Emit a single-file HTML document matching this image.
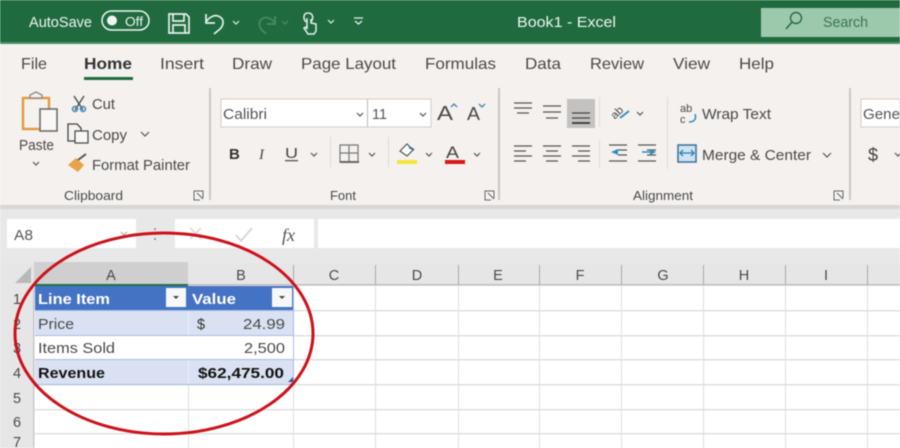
<!DOCTYPE html>
<html><head><meta charset="utf-8"><title>Book1 - Excel</title>
<style>
html,body{margin:0;padding:0;background:#fff;width:900px;height:448px;overflow:hidden}
svg{display:block;filter:blur(.4px)}
text{font-family:"Liberation Sans",sans-serif;fill:#4a4a4a}
</style></head><body>
<svg width="900" height="448" viewBox="0 0 900 448" xmlns="http://www.w3.org/2000/svg">
<rect width="900" height="448" fill="#fff"/>
<!-- title bar -->
<rect width="900" height="44" fill="#1f6b3f"/>
<rect y="42" width="900" height="2" fill="#4f8f68"/>
<text x="29" y="27" font-size="14.5" style="fill:#eef5f0" textLength="63" lengthAdjust="spacingAndGlyphs">AutoSave</text>
<rect x="102" y="11" width="47" height="19" rx="9.5" fill="none" stroke="#eef5f0" stroke-width="1.5"/>
<circle cx="112" cy="20.5" r="5" fill="#eef5f0"/>
<text x="125" y="26" font-size="12.5" style="fill:#eef5f0" textLength="18" lengthAdjust="spacingAndGlyphs">Off</text>
<g fill="none" stroke="#e6efe9" stroke-width="1.7">
<path d="M169 14h17l3 3v16h-20z"/><path d="M173 14v7h11v-7"/><path d="M173 33v-8h12v8"/>
<path d="M206 14v9h9"/><path d="M206 22c4-6 10-8 14-5 5 3 3 9 0 12l-6 5"/>
<path d="M233 21l3 3 3-3" stroke-width="1.2"/>
<path d="M275 16v8h-8M275 23c-4-5-9-7-13-4-4 3-3 8 0 11l4 4" stroke="#4c8a68"/>
<path d="M282 21l3 3 3-3" stroke="#4c8a68" stroke-width="1.2"/>
<path d="M306 22c-3-3-3-9 2-9s6 5 3 9M306 19h1v10l-1-2-2 1 4 6h6l2-3v-7l-5-1v-4" stroke-width="1.5"/>
<path d="M328 20l3 3 3-3" stroke-width="1.2"/>
<path d="M354 18h9M355 21l3.500 3 3.500-3" stroke-width="1.3"/>
</g>
<text x="517" y="27" font-size="14.500" style="fill:#eef5f0" textLength="99" lengthAdjust="spacingAndGlyphs">Book1  -  Excel</text>
<rect x="761" y="8" width="139" height="29" fill="#9cc9ac"/>
<circle cx="796" cy="18" r="5.500" fill="none" stroke="#2c6a46" stroke-width="1.400"/>
<path d="M792 22l-6 7" stroke="#2c6a46" stroke-width="1.600"/>
<text x="823" y="27" font-size="14.500" style="fill:#3d7354" textLength="45" lengthAdjust="spacingAndGlyphs">Search</text>
<!-- ribbon -->
<rect y="44" width="900" height="162" fill="#f4f1ef"/>
<rect y="205" width="900" height="4" fill="#d9d7d5"/>
<rect y="209" width="900" height="54" fill="#e8e8e8"/>
<g font-size="16">
<text x="21" y="69" textLength="26" lengthAdjust="spacingAndGlyphs">File</text>
<text x="84" y="69" textLength="48" lengthAdjust="spacingAndGlyphs" style="fill:#333;font-weight:bold">Home</text>
<text x="160" y="69" textLength="44" lengthAdjust="spacingAndGlyphs">Insert</text>
<text x="232" y="69" textLength="40" lengthAdjust="spacingAndGlyphs">Draw</text>
<text x="301" y="69" textLength="95" lengthAdjust="spacingAndGlyphs">Page Layout</text>
<text x="425" y="69" textLength="71" lengthAdjust="spacingAndGlyphs">Formulas</text>
<text x="525" y="69" textLength="36" lengthAdjust="spacingAndGlyphs">Data</text>
<text x="590" y="69" textLength="54" lengthAdjust="spacingAndGlyphs">Review</text>
<text x="673" y="69" textLength="37" lengthAdjust="spacingAndGlyphs">View</text>
<text x="739" y="69" textLength="35" lengthAdjust="spacingAndGlyphs">Help</text>
</g>
<rect x="84" y="77" width="49" height="3" fill="#1f6b3f"/>
<!-- separators -->
<g fill="#c9c7c5">
<rect x="209" y="88" width="2" height="112"/><rect x="498" y="88" width="2" height="112"/><rect x="849" y="88" width="2" height="112"/>
<rect x="330" y="137" width="1" height="30" fill="#dedcda"/><rect x="388" y="137" width="1" height="30" fill="#dedcda"/>
<rect x="599" y="97" width="1" height="30" fill="#dedcda"/><rect x="599" y="140" width="1" height="28" fill="#dedcda"/><rect x="667" y="97" width="1" height="72" fill="#dedcda"/>
</g>
<!-- clipboard -->
<rect x="23" y="98" width="26" height="31" fill="none" stroke="#e39a3c" stroke-width="2.400"/>
<path d="M30 98v-3l6-3 6 3v3z" fill="#f4f1ef" stroke="#888" stroke-width="1.300"/>
<rect x="40" y="109" width="17" height="22" fill="#f8f7f6" stroke="#666" stroke-width="1.500"/>
<text x="19" y="150" font-size="14.500" textLength="35" lengthAdjust="spacingAndGlyphs">Paste</text>
<path d="M33 162l3 3 3-3" fill="none" stroke="#555" stroke-width="1.200"/>
<path d="M74 96l9 14M84 96l-9 14" stroke="#555" stroke-width="1.500"/>
<circle cx="75" cy="109" r="2.500" fill="none" stroke="#3f86b5" stroke-width="1.500"/><circle cx="83" cy="109" r="2.500" fill="none" stroke="#3f86b5" stroke-width="1.500"/>
<text x="92" y="109" font-size="14.500" textLength="23" lengthAdjust="spacingAndGlyphs">Cut</text>
<path d="M68 124h9l4 4v13H68z" fill="none" stroke="#444" stroke-width="1.300"/>
<rect x="75" y="131" width="13" height="12" fill="#f8f7f6" stroke="#444" stroke-width="1.200"/>
<text x="92" y="140" font-size="14.500" textLength="35" lengthAdjust="spacingAndGlyphs">Copy</text>
<path d="M141 132l4 4 4-4" fill="none" stroke="#555" stroke-width="1.200"/>
<path d="M68 165l8-7 8 7-6 7z" fill="#e9a14a"/><path d="M78 160l8-6" stroke="#555" stroke-width="2"/>
<text x="92" y="170" font-size="14.500" textLength="98" lengthAdjust="spacingAndGlyphs">Format Painter</text>
<text x="64" y="200" font-size="12.500" textLength="59" lengthAdjust="spacingAndGlyphs">Clipboard</text>
<!-- launcher icons -->
<g fill="none" stroke="#666" stroke-width="1"><path d="M203 198v-7h-9v9h6M197 193l6 6"/><path d="M494 198v-7h-9v9h6M488 193l6 6"/><path d="M843 198v-7h-9v9h6M837 193l6 6"/></g>
<!-- font -->
<rect x="221" y="99" width="210" height="28" fill="#fff" stroke="#cfcdcb"/>
<rect x="367" y="99" width="1" height="28" fill="#bbb"/>
<text x="223" y="119" font-size="14.500" style="fill:#555" textLength="44" lengthAdjust="spacingAndGlyphs">Calibri</text>
<text x="372" y="119" font-size="14.500" style="fill:#555" textLength="15" lengthAdjust="spacingAndGlyphs">11</text>
<path d="M357 113l3 3 3-3M420 113l3 3 3-3" fill="none" stroke="#555" stroke-width="1.200"/>
<text x="437" y="120" font-size="20" textLength="16" lengthAdjust="spacingAndGlyphs">A</text>
<path d="M451 107l3-3 3 3" fill="none" stroke="#3f86b5" stroke-width="1.300"/>
<text x="467" y="120" font-size="18" textLength="13" lengthAdjust="spacingAndGlyphs">A</text>
<path d="M479 104l3 3 3-3" fill="none" stroke="#3f86b5" stroke-width="1.300"/>
<text x="229" y="159" font-size="15" style="fill:#333;font-weight:bold">B</text>
<text x="259" y="159" font-size="15" style="fill:#444;font-style:italic;font-family:'Liberation Serif',serif">I</text>
<text x="285" y="158" font-size="15" textLength="13" lengthAdjust="spacingAndGlyphs">U</text>
<rect x="285" y="160" width="13" height="1.300" fill="#555"/>
<path d="M311 153l3 3 3-3M369 153l3 3 3-3M426 153l3 3 3-3M474 153l3 3 3-3" fill="none" stroke="#555" stroke-width="1.200"/>
<path d="M340 145h18v17h-18zM349 145v17M340 153h18" fill="none" stroke="#777" stroke-width="1.200"/>
<rect x="340" y="161" width="19" height="2" fill="#666"/>
<path d="M400 151l7-7 6 6-6 6z" fill="#fff" stroke="#555" stroke-width="1.200"/><path d="M409 147l5 3" stroke="#2f6f9f" stroke-width="2"/>
<rect x="397" y="160" width="20" height="4" fill="#f3e63a"/>
<text x="446" y="158" font-size="17" style="fill:#444" textLength="13" lengthAdjust="spacingAndGlyphs">A</text>
<rect x="445" y="160" width="20" height="4" fill="#d81818"/>
<text x="330" y="200" font-size="12.500" textLength="26" lengthAdjust="spacingAndGlyphs">Font</text>
<!-- alignment -->
<rect x="567" y="99" width="28" height="29" fill="#c4c2c0"/>
<g stroke="#555" stroke-width="1.300">
<path d="M514 103h18M514 108h18M517 113h12"/>
<path d="M543 106h18M543 112h18M546 118h12"/>
<path d="M572 113h18M572 118h18" stroke="#444"/><path d="M572 123h18" stroke="#333" stroke-width="1.700"/>
<path d="M514 146h18M514 151h12M514 156h18M514 161h12"/>
<path d="M543 146h18M546 151h12M543 156h18M546 161h12"/>
<path d="M572 146h18M578 151h12M572 156h18M578 161h12"/>
<path d="M609 145h18M618 150h9M618 155h9M609 161h18"/>
<path d="M638 145h18M647 150h9M647 155h9M638 161h18"/>
</g>
<path d="M611 152l7-3v6zM656 152l-6-3v6z" fill="#2b8ec4"/><path d="M613 152h4M642 152h8" stroke="#2b8ec4" stroke-width="1.500"/>
<text x="610" y="116" font-size="11" transform="rotate(-45 617 112)" textLength="13" lengthAdjust="spacingAndGlyphs">ab</text>
<path d="M620 118l9-7" stroke="#2b8ec4" stroke-width="1.800"/>
<path d="M637 112l3 3 3-3" fill="none" stroke="#555" stroke-width="1.200"/>
<text x="680" y="112" font-size="11">ab</text><text x="680" y="123" font-size="11">c</text>
<path d="M695 114c2 6-2 8-6 8" fill="none" stroke="#2b8ec4" stroke-width="1.500"/>
<text x="702" y="119" font-size="15" textLength="69" lengthAdjust="spacingAndGlyphs">Wrap Text</text>
<rect x="678" y="145" width="18" height="17" fill="#cfe4f2" stroke="#3a6f99" stroke-width="1.500"/>
<path d="M681 153h12M683 150l-3 3 3 3M691 150l3 3-3 3" fill="none" stroke="#2b7fb5" stroke-width="1.300"/>
<text x="702" y="160" font-size="15" textLength="109" lengthAdjust="spacingAndGlyphs">Merge &amp; Center</text>
<path d="M823 153l4 4 4-4" fill="none" stroke="#555" stroke-width="1.200"/>
<text x="633" y="200" font-size="12.500" textLength="60" lengthAdjust="spacingAndGlyphs">Alignment</text>
<!-- number -->
<rect x="861" y="99" width="39" height="28" fill="#fff" stroke="#cfcdcb"/>
<text x="863" y="119" font-size="14.500" style="fill:#555" textLength="37" lengthAdjust="spacingAndGlyphs">Gene</text>
<text x="868" y="161" font-size="18" style="fill:#444">$</text>
<path d="M895 153l3 3 3-3" fill="none" stroke="#555" stroke-width="1.200"/>
<!-- formula bar -->
<rect x="7" y="219" width="129" height="29" fill="#fff"/>
<text x="14" y="240" font-size="15" style="fill:#555" textLength="19" lengthAdjust="spacingAndGlyphs">A8</text>
<path d="M121 232l3 3 3-3" fill="none" stroke="#aaa" stroke-width="1.200"/>
<circle cx="155" cy="229" r="1" fill="#888"/><circle cx="155" cy="234" r="1" fill="#888"/><circle cx="155" cy="239" r="1" fill="#888"/>
<rect x="175" y="219" width="139" height="29" fill="#fff"/>
<rect x="318" y="219" width="582" height="29" fill="#fff"/>
<path d="M190 228l11 11M201 228l-11 11" stroke="#ddd" stroke-width="1.800"/>
<path d="M236 235l5 6 11-13" fill="none" stroke="#d6d6d6" stroke-width="1.800"/>
<text x="282" y="241" font-size="18" style="fill:#555;font-style:italic;font-family:'Liberation Serif',serif">fx</text>
<!-- headers -->
<rect x="0" y="263" width="900" height="23" fill="#e6e6e6"/>
<rect x="0" y="286" width="34" height="162" fill="#e6e6e6"/>
<path d="M15 283h16v-16z" fill="#b9b9b9"/>
<rect x="34" y="262" width="154" height="23" fill="#cfcfcf"/>
<rect x="34" y="284" width="154" height="2" fill="#217346"/>
<rect x="188" y="284" width="712" height="1.500" fill="#c0c0c0"/>
<rect x="33" y="286" width="1.500" height="162" fill="#c8c8c8"/>
<g font-size="14.500" text-anchor="middle" style="fill:#555">
<text x="111" y="280">A</text><text x="241" y="280">B</text><text x="334" y="280">C</text><text x="417" y="280">D</text><text x="498" y="280">E</text><text x="580" y="280">F</text><text x="663" y="280">G</text><text x="744" y="280">H</text><text x="826" y="280">I</text>
<text x="17" y="304">1</text><text x="17" y="329">2</text><text x="17" y="353">3</text><text x="17" y="378">4</text><text x="17" y="403">5</text><text x="17" y="427">6</text><text x="17" y="447">7</text>
</g>
<!-- grid -->
<g fill="#dfdfdf">
<rect x="34" y="310" width="866" height="1.500"/><rect x="34" y="335" width="866" height="1.500"/><rect x="34" y="359" width="866" height="1.500"/><rect x="34" y="384" width="866" height="1.500"/><rect x="34" y="409" width="866" height="1.500"/><rect x="34" y="433" width="866" height="1.500"/>
<rect x="188" y="286" width="1" height="162"/><rect x="293" y="286" width="1" height="162"/><rect x="375" y="286" width="1" height="162"/><rect x="458" y="286" width="1" height="162"/><rect x="539" y="286" width="1" height="162"/><rect x="621" y="286" width="1" height="162"/><rect x="703" y="286" width="1" height="162"/><rect x="785" y="286" width="1" height="162"/><rect x="867" y="286" width="1" height="162"/>
</g>
<g fill="#a9a9a9"><rect x="293" y="265" width="1" height="20"/><rect x="375" y="265" width="1" height="20"/><rect x="458" y="265" width="1" height="20"/><rect x="539" y="265" width="1" height="20"/><rect x="621" y="265" width="1" height="20"/><rect x="703" y="265" width="1" height="20"/><rect x="785" y="265" width="1" height="20"/><rect x="867" y="265" width="1" height="20"/></g>
<!-- table -->
<rect x="35" y="286" width="258" height="24" fill="#4472c4"/>
<rect x="35" y="311" width="258" height="24" fill="#d9e1f2"/>
<rect x="35" y="336" width="258" height="23" fill="#fff"/>
<rect x="35" y="360" width="258" height="24" fill="#d9e1f2"/>
<path d="M35 310.500h258M35 335.500h258M35 359.500h258M35 384.500h258" stroke="#a9bde3"/>
<path d="M293.500 286v98" stroke="#a9bde3"/>
<path d="M188.500 311v24M188.500 360v24" stroke="#fff" opacity=".5"/>
<rect x="166" y="288" width="20" height="19" fill="#f7f7f7"/><rect x="272" y="288" width="20" height="19" fill="#f7f7f7"/>
<path d="M173 296h6l-3 3zM279 296h6l-3 3z" fill="#444"/>
<text x="38" y="304" font-size="14.500" style="fill:#fff;font-weight:bold" textLength="72" lengthAdjust="spacingAndGlyphs">Line Item</text>
<text x="192" y="304" font-size="14.500" style="fill:#fff;font-weight:bold" textLength="44" lengthAdjust="spacingAndGlyphs">Value</text>
<text x="38" y="329" font-size="14.500" textLength="36" lengthAdjust="spacingAndGlyphs">Price</text>
<text x="197" y="329" font-size="14.500" style="fill:#333">$</text>
<text x="243" y="329" font-size="14.500" textLength="42" lengthAdjust="spacingAndGlyphs">24.99</text>
<text x="38" y="353" font-size="14.500" textLength="77" lengthAdjust="spacingAndGlyphs">Items Sold</text>
<text x="244" y="353" font-size="14.500" textLength="41" lengthAdjust="spacingAndGlyphs">2,500</text>
<text x="38" y="378" font-size="14.500" style="fill:#111;font-weight:bold" textLength="67" lengthAdjust="spacingAndGlyphs">Revenue</text>
<text x="198" y="378" font-size="14.500" style="fill:#111;font-weight:bold" textLength="86" lengthAdjust="spacingAndGlyphs">$62,475.00</text>
<path d="M288 382h5v-5z" fill="#3355aa"/>
<!-- red circle -->
<ellipse cx="164" cy="333.500" rx="149" ry="100.500" fill="none" stroke="#cc111b" stroke-width="3"/>
</svg>
</body></html>
